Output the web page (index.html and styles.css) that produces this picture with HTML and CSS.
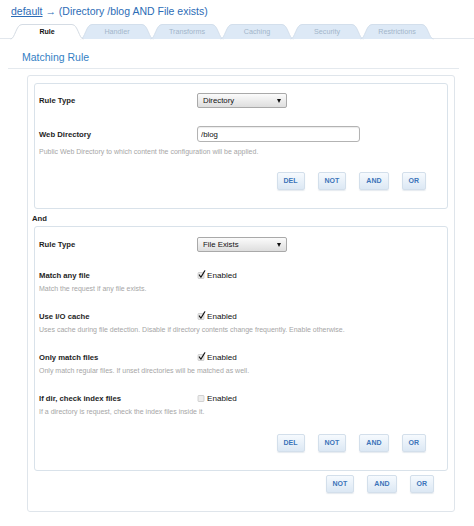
FILE: index.html
```html
<!DOCTYPE html>
<html>
<head>
<meta charset="utf-8">
<link rel="stylesheet" href="styles.css">
</head>
<body>
<div class="title"><a class="crumb" href="#">default</a> → (Directory /blog AND File exists)</div>

<div class="tabs">
  <div class="tab active"><svg viewBox="0 0 74 15" preserveAspectRatio="none"><path d="M0.5,15 C5,15 6,0.5 12,0.5 L62,0.5 C68,0.5 69,15 73.5,15"/></svg><span>Rule</span></div>
  <div class="tab"><svg viewBox="0 0 74 15" preserveAspectRatio="none"><path d="M0.5,15 C5,15 6,0.5 12,0.5 L62,0.5 C68,0.5 69,15 73.5,15"/></svg><span>Handler</span></div>
  <div class="tab"><svg viewBox="0 0 74 15" preserveAspectRatio="none"><path d="M0.5,15 C5,15 6,0.5 12,0.5 L62,0.5 C68,0.5 69,15 73.5,15"/></svg><span>Transforms</span></div>
  <div class="tab"><svg viewBox="0 0 74 15" preserveAspectRatio="none"><path d="M0.5,15 C5,15 6,0.5 12,0.5 L62,0.5 C68,0.5 69,15 73.5,15"/></svg><span>Caching</span></div>
  <div class="tab"><svg viewBox="0 0 74 15" preserveAspectRatio="none"><path d="M0.5,15 C5,15 6,0.5 12,0.5 L62,0.5 C68,0.5 69,15 73.5,15"/></svg><span>Security</span></div>
  <div class="tab"><svg viewBox="0 0 74 15" preserveAspectRatio="none"><path d="M0.5,15 C5,15 6,0.5 12,0.5 L62,0.5 C68,0.5 69,15 73.5,15"/></svg><span>Restrictions</span></div>
</div>

<div class="heading">Matching Rule</div>

<div class="outer">
  <div class="box box-first">
    <div class="row">
      <div class="label">Rule Type</div>
      <div class="select"><span>Directory</span><i class="arrow"></i></div>
    </div>
    <div class="row row-input">
      <div class="label">Web Directory</div>
      <input class="text" type="text" value="/blog">
    </div>
    <div class="help help-input">Public Web Directory to which content the configuration will be applied.</div>
    <div class="buttons">
      <span class="btn">DEL</span><span class="btn">NOT</span><span class="btn">AND</span><span class="btn">OR</span>
    </div>
  </div>

  <div class="and">And</div>

  <div class="box box-second">
    <div class="row">
      <div class="label">Rule Type</div>
      <div class="select"><span>File Exists</span><i class="arrow"></i></div>
    </div>

    <div class="field">
      <div class="row">
        <div class="label">Match any file</div>
        <div class="check"><svg class="cb" viewBox="0 0 9 9"><rect x="1" y="2.5" width="6" height="6" rx="0.8" class="cb-box"/><path d="M2.3,5 L3.9,7.2 L7.8,0.8" class="cb-mark"/></svg><span>Enabled</span></div>
      </div>
      <div class="help">Match the request if any file exists.</div>
    </div>

    <div class="field">
      <div class="row">
        <div class="label">Use I/O cache</div>
        <div class="check"><svg class="cb" viewBox="0 0 9 9"><rect x="1" y="2.5" width="6" height="6" rx="0.8" class="cb-box"/><path d="M2.3,5 L3.9,7.2 L7.8,0.8" class="cb-mark"/></svg><span>Enabled</span></div>
      </div>
      <div class="help">Uses cache during file detection. Disable if directory contents change frequently. Enable otherwise.</div>
    </div>

    <div class="field">
      <div class="row">
        <div class="label">Only match files</div>
        <div class="check"><svg class="cb" viewBox="0 0 9 9"><rect x="1" y="2.5" width="6" height="6" rx="0.8" class="cb-box"/><path d="M2.3,5 L3.9,7.2 L7.8,0.8" class="cb-mark"/></svg><span>Enabled</span></div>
      </div>
      <div class="help">Only match regular files. If unset directories will be matched as well.</div>
    </div>

    <div class="field">
      <div class="row">
        <div class="label">If dir, check index files</div>
        <div class="check"><svg class="cb" viewBox="0 0 9 9"><rect x="1" y="2.5" width="6" height="6" rx="0.8" class="cb-box cb-off"/></svg><span>Enabled</span></div>
      </div>
      <div class="help">If a directory is request, check the index files inside it.</div>
    </div>

    <div class="buttons buttons-second">
      <span class="btn">DEL</span><span class="btn">NOT</span><span class="btn">AND</span><span class="btn">OR</span>
    </div>
  </div>

  <div class="buttons buttons-outer">
    <span class="btn">NOT</span><span class="btn">AND</span><span class="btn">OR</span>
  </div>
</div>
</body>
</html>
```

FILE: styles.css
```css
html, body {
  margin: 0;
  padding: 0;
  background: #ffffff;
}

body {
  font-family: "Liberation Sans", Arial, Helvetica, sans-serif;
  color: #222222;
}

.title {
  padding: 4px 0 0 11px;
  font-size: 10.5px;
  line-height: 14px;
  height: 14px;
  color: #2c6cb6;
  white-space: nowrap;
}

.crumb {
  color: #2c6cb6;
  text-decoration: underline;
}

.tabs {
  margin-top: 6px;
  display: flex;
  padding-left: 10px;
  height: 14px;
  border-bottom: 1px solid #e2e7ed;
}

.tab {
  position: relative;
  width: 74px;
  height: 15px;
  margin-right: -4px;
  flex: none;
  text-align: center;
  font-size: 7.2px;
  line-height: 15px;
  color: #a3b6ca;
}

.tab svg {
  position: absolute;
  left: 0;
  top: 0;
  width: 74px;
  height: 15px;
  overflow: visible;
}

.tab svg path {
  fill: #dde9f6;
  stroke: #d3dfec;
  stroke-width: 1;
}

.tab span {
  position: relative;
}

.tab.active {
  z-index: 2;
  color: #111111;
  font-weight: bold;
  font-size: 7px;
}

.tab.active svg path {
  fill: #ffffff;
  stroke: #d5dce4;
}

.heading {
  margin: 11px 0 0 8px;
  width: 437px;
  padding: 0 0 4px 14px;
  font-size: 10.5px;
  line-height: 14px;
  color: #3480c4;
  border-bottom: 1px solid #e4e9ee;
}

.outer {
  margin: 6px 0 0 27px;
  width: 414px;
  padding: 7px 6px 18px 6px;
  border: 1px solid #dfe5eb;
  border-radius: 3px;
}

.box {
  border: 1px solid #d9e2ea;
  border-radius: 3px;
  padding: 9px 0 18px 4px;
}

.box-second {
  padding-top: 10px;
}

.row {
  display: flex;
  align-items: center;
  height: 15px;
}

.row-input {
  margin-top: 18px;
  height: 16px;
}

.label {
  width: 158px;
  flex: none;
  font-size: 7.7px;
  font-weight: bold;
  color: #1e1e1e;
  white-space: nowrap;
}

.select {
  height: 13px;
  width: 78px;
  border: 1px solid #a9a9a9;
  border-radius: 2px;
  background: linear-gradient(#fbfbfb, #dedede);
  display: flex;
  align-items: center;
  justify-content: space-between;
  padding: 0 5px 0 5px;
  box-sizing: content-box;
  font-size: 7.8px;
  color: #111111;
}

.arrow {
  width: 0;
  height: 0;
  border-left: 2.2px solid transparent;
  border-right: 2.2px solid transparent;
  border-top: 4px solid #111111;
}

.text {
  width: 163px;
  height: 16px;
  box-sizing: border-box;
  margin: 0;
  padding: 0 3px;
  border: 1px solid #b3b3b3;
  border-radius: 3px;
  font-family: "Liberation Sans", Arial, sans-serif;
  font-size: 7.8px;
  color: #111111;
  background: #ffffff;
  box-shadow: inset 0 1px 1px rgba(0,0,0,0.08);
  outline: none;
}

.help {
  margin-top: 2px;
  font-size: 7px;
  line-height: 8px;
  height: 8px;
  color: #a6a6a6;
  white-space: nowrap;
}

.help-input {
  margin-top: 6px;
}

.field {
  margin-top: 16px;
}

.field:first-of-type {
  margin-top: 18px;
}

.check {
  display: flex;
  align-items: center;
  font-size: 8.1px;
  color: #111111;
}

.cb {
  width: 9px;
  height: 9px;
  margin: -3px 1px 0 0;
  overflow: visible;
}

.cb-box {
  fill: #e9e9e9;
  stroke: #b9b9b9;
  stroke-width: 0.6;
}

.cb-off {
  fill: #eeeeee;
}

.cb-mark {
  fill: none;
  stroke: #111111;
  stroke-width: 1.2;
  stroke-linecap: round;
  stroke-linejoin: round;
}

.buttons {
  display: flex;
  justify-content: flex-end;
  gap: 13px;
  margin-top: 16px;
  padding-right: 21px;
}

.buttons-second {
  margin-top: 18px;
}

.buttons-outer {
  margin-top: 4px;
  padding-right: 14px;
}

.btn {
  display: inline-block;
  height: 16px;
  line-height: 16px;
  padding: 0 6px;
  border: 1px solid #d3dfeb;
  border-radius: 2px;
  background: linear-gradient(#f6fafe, #dce8f4);
  box-shadow: 0 1px 1px rgba(150,170,190,0.25);
  font-size: 7px;
  font-weight: bold;
  color: #3c74b9;
}

.and {
  margin: 4px 0 2px -2px;
  font-size: 7.7px;
  line-height: 11px;
  font-weight: bold;
  color: #1e1e1e;
}
```
